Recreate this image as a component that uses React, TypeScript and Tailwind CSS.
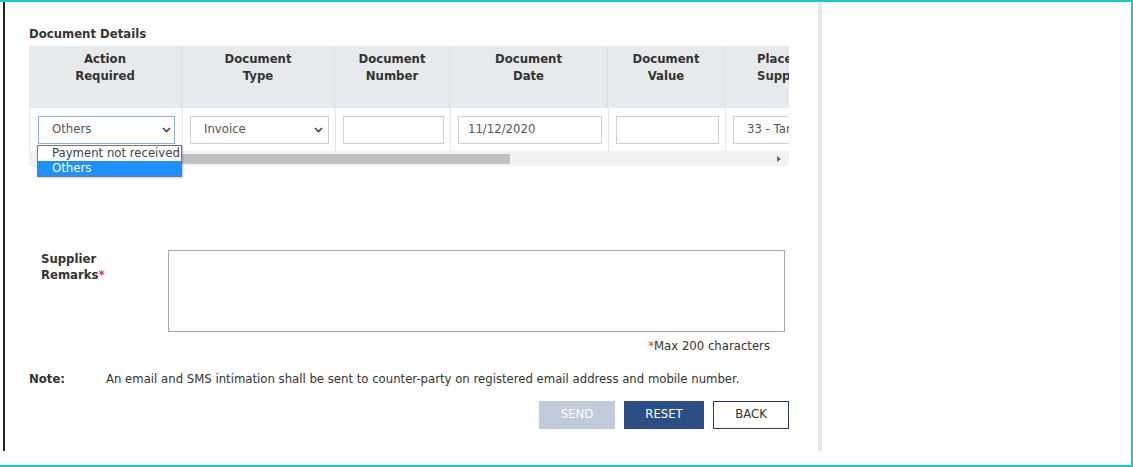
import React from "react";

const font = { fontFamily: '"DejaVu Sans", Verdana, sans-serif' };

const Header = ({ top, bottom, w }: { top: string; bottom: string; w: string }) => (
    <div className={`${w} shrink-0 border-r border-[#d9dde0] pt-[5px] text-center font-bold leading-[17px] text-[#333]`}>
        {top}
        <br />
        {bottom}
    </div>
);

const App: React.FC = () => {
    return (
        <div
            className="flex h-[467px] w-[1133px] overflow-hidden border-r-2 border-b-2 border-t-2 border-[#1cc9c9] bg-white pl-[3px] text-[11.7px] text-[#333]"
            style={font}
        >
            {/* barra izquierda */}
            <div className="h-[449px] w-[2px] shrink-0 bg-[#222]" />

            {/* contenido */}
            <div className="relative w-[813px] shrink-0 pl-[24px] pt-[24px]">
                <div className="font-bold leading-[16px]">Document Details</div>

                {/* tabla */}
                <div className="mt-[4px] w-[760px] overflow-hidden">
                    <div className="flex h-[62px] bg-[#e7eaed]">
                        <Header w="w-[153px]" top="Action" bottom="Required" />
                        <Header w="w-[153px]" top="Document" bottom="Type" />
                        <Header w="w-[115px]" top="Document" bottom="Number" />
                        <Header w="w-[158px]" top="Document" bottom="Date" />
                        <Header w="w-[117px]" top="Document" bottom="Value" />
                        <div className="w-[100px] shrink-0 pt-[5px] pl-[32px] font-bold leading-[17px] whitespace-nowrap">
                            Place of
                            <br />
                            Supply
                        </div>
                    </div>
                    <div className="flex h-[43px] border-l border-[#e6e6e6] text-[#555]">
                        <div className="w-[153px] shrink-0 border-r border-[#e6e6e6] pl-[8px] pt-[8px]">
                            <div className="flex h-[28px] w-[137px] items-center justify-between border border-[#8fb3dc] pl-[13px] pr-[3px]">
                                <span>Others</span>
                                <svg width="9" height="6" viewBox="0 0 9 6">
                                    <path d="M1 1l3.5 3.5L8 1" fill="none" stroke="#444" strokeWidth="1.6" />
                                </svg>
                            </div>
                        </div>
                        <div className="w-[153px] shrink-0 border-r border-[#e6e6e6] pl-[7px] pt-[8px]">
                            <div className="flex h-[28px] w-[139px] items-center justify-between border border-[#d0d0d0] pl-[13px] pr-[5px]">
                                <span>Invoice</span>
                                <svg width="9" height="6" viewBox="0 0 9 6">
                                    <path d="M1 1l3.5 3.5L8 1" fill="none" stroke="#444" strokeWidth="1.6" />
                                </svg>
                            </div>
                        </div>
                        <div className="w-[115px] shrink-0 border-r border-[#e6e6e6] pl-[7px] pt-[8px]">
                            <div className="h-[28px] w-[101px] border border-[#d0d0d0]" />
                        </div>
                        <div className="w-[158px] shrink-0 border-r border-[#e6e6e6] pl-[7px] pt-[8px]">
                            <div className="flex h-[28px] w-[144px] items-center border border-[#d0d0d0] pl-[9px]">11/12/2020</div>
                        </div>
                        <div className="w-[117px] shrink-0 border-r border-[#e6e6e6] pl-[7px] pt-[8px]">
                            <div className="h-[28px] w-[103px] border border-[#d0d0d0]" />
                        </div>
                        <div className="w-[100px] shrink-0 pl-[7px] pt-[8px]">
                            <div className="flex h-[28px] w-[90px] items-center whitespace-nowrap border border-[#d0d0d0] pl-[13px]">
                                33 - Tamil Nadu
                            </div>
                        </div>
                    </div>
                    {/* scrollbar */}
                    <div className="flex h-[15px] items-center bg-[#f1f1f1] px-[2px]">
                        <div className="ml-[12px] h-[10px] w-[467px] bg-[#c1c1c1]" />
                        <div className="flex-1" />
                        <svg width="4" height="6" viewBox="0 0 4 6" className="mr-[6px]">
                            <path d="M0 0l4 3-4 3z" fill="#666" />
                        </svg>
                    </div>
                </div>

                {/* lista desplegable */}
                <div className="absolute left-[32px] top-[143px] w-[145px] border border-[#767676] bg-white leading-[15px] whitespace-nowrap shadow-[1px_1px_2px_rgba(0,0,0,0.2)]">
                    <div className="pl-[14px] text-[#444]">Payment not received</div>
                    <div className="bg-[#1e90ff] pl-[14px] text-white">Others</div>
                </div>

                {/* observaciones */}
                <div className="mt-[84px] flex">
                    <div className="w-[139px] shrink-0 pl-[12px] pt-[1px] font-bold leading-[16px]">
                        Supplier
                        <br />
                        Remarks<span className="text-[#e33]">*</span>
                    </div>
                    <div className="h-[82px] w-[617px] border border-[#a9a9a9] shadow-[inset_0_0_1px_rgba(0,0,0,0.15)]" />
                </div>
                <div className="mt-[6px] w-[741px] text-right leading-[16px]">
                    <span className="text-[#e33]">*</span>Max 200 characters
                </div>

                <div className="mt-[17px] flex leading-[16px]">
                    <div className="w-[77px] shrink-0 font-bold">Note:</div>
                    <div>An email and SMS intimation shall be sent to counter-party on registered email address and mobile number.</div>
                </div>

                {/* botones */}
                <div className="mt-[14px] flex w-[760px] justify-end gap-[9px]">
                    <button className="h-[28px] w-[76px] bg-[#c2cbdc] text-white">SEND</button>
                    <button className="h-[28px] w-[80px] bg-[#2c4e86] text-white">RESET</button>
                    <button className="h-[28px] w-[76px] border border-[#2c3e5c] bg-white text-[#333]">BACK</button>
                </div>
            </div>

            {/* separador derecho */}
            <div className="h-[449px] w-[4px] shrink-0 bg-[#e6e8eb]" />
        </div>
    );
};

export default App;
